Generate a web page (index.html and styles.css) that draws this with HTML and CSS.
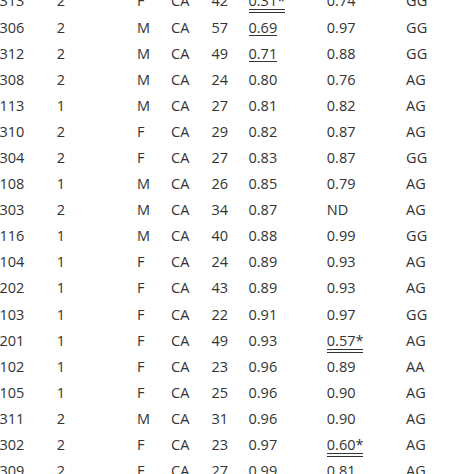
FILE: index.html
```html
<!DOCTYPE html>
<html>
<head>
<meta charset="utf-8">
<link rel="stylesheet" href="styles.css">
</head>
<body>
<div class="table">
  <div class="row"><span>313</span><span>2</span><span>F</span><span>CA</span><span>42</span><span><span class="u2">0.31*</span></span><span>0.74</span><span>GG</span></div>
  <div class="row"><span>306</span><span>2</span><span>M</span><span>CA</span><span>57</span><span><span class="u1">0.69</span></span><span>0.97</span><span>GG</span></div>
  <div class="row"><span>312</span><span>2</span><span>M</span><span>CA</span><span>49</span><span><span class="u1">0.71</span></span><span>0.88</span><span>GG</span></div>
  <div class="row"><span>308</span><span>2</span><span>M</span><span>CA</span><span>24</span><span>0.80</span><span>0.76</span><span>AG</span></div>
  <div class="row"><span>113</span><span>1</span><span>M</span><span>CA</span><span>27</span><span>0.81</span><span>0.82</span><span>AG</span></div>
  <div class="row"><span>310</span><span>2</span><span>F</span><span>CA</span><span>29</span><span>0.82</span><span>0.87</span><span>AG</span></div>
  <div class="row"><span>304</span><span>2</span><span>F</span><span>CA</span><span>27</span><span>0.83</span><span>0.87</span><span>GG</span></div>
  <div class="row"><span>108</span><span>1</span><span>M</span><span>CA</span><span>26</span><span>0.85</span><span>0.79</span><span>AG</span></div>
  <div class="row"><span>303</span><span>2</span><span>M</span><span>CA</span><span>34</span><span>0.87</span><span>ND</span><span>AG</span></div>
  <div class="row"><span>116</span><span>1</span><span>M</span><span>CA</span><span>40</span><span>0.88</span><span>0.99</span><span>GG</span></div>
  <div class="row"><span>104</span><span>1</span><span>F</span><span>CA</span><span>24</span><span>0.89</span><span>0.93</span><span>AG</span></div>
  <div class="row"><span>202</span><span>1</span><span>F</span><span>CA</span><span>43</span><span>0.89</span><span>0.93</span><span>AG</span></div>
  <div class="row"><span>103</span><span>1</span><span>F</span><span>CA</span><span>22</span><span>0.91</span><span>0.97</span><span>GG</span></div>
  <div class="row"><span>201</span><span>1</span><span>F</span><span>CA</span><span>49</span><span>0.93</span><span><span class="u2">0.57*</span></span><span>AG</span></div>
  <div class="row"><span>102</span><span>1</span><span>F</span><span>CA</span><span>23</span><span>0.96</span><span>0.89</span><span>AA</span></div>
  <div class="row"><span>105</span><span>1</span><span>F</span><span>CA</span><span>25</span><span>0.96</span><span>0.90</span><span>AG</span></div>
  <div class="row"><span>311</span><span>2</span><span>M</span><span>CA</span><span>31</span><span>0.96</span><span>0.90</span><span>AG</span></div>
  <div class="row"><span>302</span><span>2</span><span>F</span><span>CA</span><span>23</span><span>0.97</span><span><span class="u2">0.60*</span></span><span>AG</span></div>
  <div class="row"><span>309</span><span>2</span><span>F</span><span>CA</span><span>27</span><span>0.99</span><span>0.81</span><span>AG</span></div>
</div>
</body>
</html>
```
FILE: styles.css
```css
html, body {
  margin: 0;
  padding: 0;
  background: #ffffff;
  overflow: hidden;
}
.table {
  margin-top: -11.6px;
  margin-left: -0.6px;
  font-family: "Open Sans", "Noto Sans", sans-serif;
  font-size: 14.5px;
  color: #333333;
}
.row {
  display: grid;
  grid-template-columns: 57.3px 80.3px 34px 40.5px 37px 78.3px 79.3px 1fr;
  height: 26.1px;
  line-height: 26.1px;
  white-space: nowrap;
}
.u1 {
  display: inline-block;
  line-height: 15px;
  padding-bottom: 0.5px;
  border-bottom: 1.5px solid #333333;
}
.u2 {
  display: inline-block;
  line-height: 15px;
  padding-bottom: 1px;
  border-bottom: 4.8px double #333333;
}
```
